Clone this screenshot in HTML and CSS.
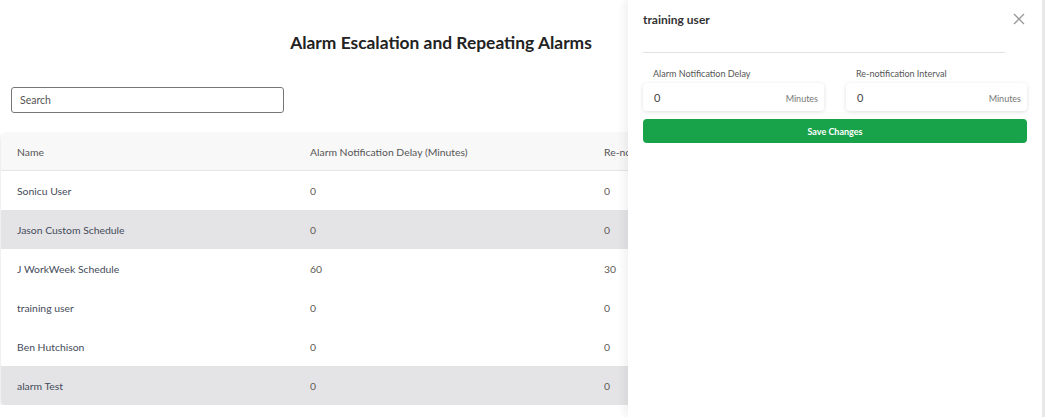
FILE: index.html
```html
<!DOCTYPE html>
<html>
<head>
<meta charset="utf-8">
<title>Alarm Escalation and Repeating Alarms</title>
<link rel="stylesheet" href="styles.css">
</head>
<body>

<div class="main">
	<h1 class="page-title">Alarm Escalation and Repeating Alarms</h1>

	<div class="search-row">
		<input class="search" type="text" placeholder="Search">
	</div>

	<div class="table-card">
		<div class="row head">
			<div>Name</div>
			<div>Alarm Notification Delay (Minutes)</div>
			<div>Re-notification Interval (Minutes)</div>
		</div>
		<div class="row">
			<div class="name">Sonicu User</div>
			<div>0</div>
			<div>0</div>
		</div>
		<div class="row shade">
			<div class="name">Jason Custom Schedule</div>
			<div>0</div>
			<div>0</div>
		</div>
		<div class="row">
			<div class="name">J WorkWeek Schedule</div>
			<div>60</div>
			<div>30</div>
		</div>
		<div class="row">
			<div class="name">training user</div>
			<div>0</div>
			<div>0</div>
		</div>
		<div class="row">
			<div class="name">Ben Hutchison</div>
			<div>0</div>
			<div>0</div>
		</div>
		<div class="row shade">
			<div class="name">alarm Test</div>
			<div>0</div>
			<div>0</div>
		</div>
	</div>
</div>

<div class="drawer">
	<div class="drawer-head">
		<span class="drawer-title">training user</span>
		<svg class="close" width="12" height="12" viewBox="0 0 12 12">
			<path d="M1 1 L11 11 M11 1 L1 11" stroke="#999" stroke-width="1.3" fill="none"/>
		</svg>
	</div>
	<div class="divider"></div>

	<div class="fields">
		<div class="field">
			<label>Alarm Notification Delay</label>
			<div class="box">
				<span class="val">0</span>
				<span class="unit">Minutes</span>
			</div>
		</div>
		<div class="field">
			<label>Re-notification Interval</label>
			<div class="box">
				<span class="val">0</span>
				<span class="unit">Minutes</span>
			</div>
		</div>
	</div>

	<button class="save">Save Changes</button>
</div>

</body>
</html>
```

FILE: styles.css
```css
* {
	box-sizing: border-box;
}

body {
	margin: 0;
	font-family: Lato, "Open Sans", sans-serif;
	background: #fff;
	color: #333;
	overflow: hidden;
}

.main {
	width: 882px;
	padding-top: 32px;
}

.page-title {
	margin: 0;
	text-align: center;
	font-size: 17.4px;
	line-height: 22px;
	font-weight: 700;
	color: #222;
}

.search-row {
	padding: 33px 0 0 11px;
}

.search {
	width: 273px;
	height: 26px;
	border: 1px solid #777;
	border-radius: 3px;
	padding: 0 8px;
	font-family: inherit;
	font-size: 10.5px;
	color: #444;
}

.search::placeholder {
	color: #555;
}

.table-card {
	margin: 21px 0 0 1px;
	border-radius: 4px;
	box-shadow: 0 1px 4px rgba(0, 0, 0, 0.15);
	overflow: hidden;
}

.row {
	display: grid;
	grid-template-columns: 309px 294px 1fr;
	height: 39px;
	align-items: center;
	font-size: 10.4px;
	color: #5e5a55;
	background: #fff;
}

.row div {
	padding-left: 16px;
	white-space: nowrap;
	overflow: hidden;
}

.row div + div {
	padding-left: 0;
}

.row .name {
	color: #454b5a;
}

.row.head {
	height: 37px;
	background: #f8f8f8;
	border-bottom: 1px solid #e6e6e6;
	color: #555;
}

.row.shade {
	background: #e4e4e6;
}

.drawer {
	position: absolute;
	top: 0;
	right: 0;
	bottom: 0;
	width: 417px;
	background: #fff;
	border-right: 3px solid #e8e8e8;
	box-shadow: -4px 0 8px rgba(0, 0, 0, 0.06);
	padding: 12px 15px 0 15px;
}

.drawer-head {
	display: flex;
	justify-content: space-between;
	align-items: center;
	height: 14px;
}

.drawer-title {
	font-size: 12px;
	font-weight: 700;
	color: #333;
}

.close {
	margin-right: 2px;
}

.divider {
	height: 1px;
	background: #e2e2e2;
	margin: 26px 22px 0 0;
}

.fields {
	display: flex;
	gap: 22px;
	margin-top: 15px;
}

.field {
	flex: 1;
}

.field label {
	display: block;
	font-size: 9px;
	color: #555;
	padding-left: 10px;
	height: 15px;
	line-height: 12px;
}

.box {
	display: flex;
	justify-content: space-between;
	align-items: center;
	height: 28px;
	border-radius: 4px;
	box-shadow: 0 1px 4px rgba(0, 0, 0, 0.13);
	padding: 0 6px 0 11px;
}

.val {
	font-size: 11px;
	color: #444;
}

.unit {
	font-size: 9px;
	color: #777;
	padding-top: 2px;
}

.save {
	display: block;
	width: 100%;
	height: 24px;
	margin-top: 8px;
	border: 0;
	border-radius: 4px;
	background: #18a34a;
	color: #fff;
	font-family: inherit;
	font-size: 9px;
	font-weight: 700;
}
```
